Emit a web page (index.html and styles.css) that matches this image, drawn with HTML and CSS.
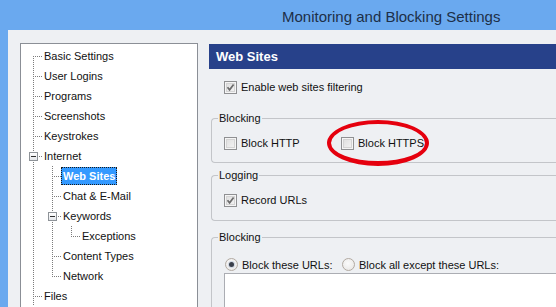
FILE: index.html
```html
<!DOCTYPE html>
<html>
<head>
<meta charset="utf-8">
<link rel="stylesheet" href="styles.css">
</head>
<body>
<div class="window">
  <div class="titlebar">Monitoring and Blocking Settings</div>
  <div class="client">
    <div class="tree">
      <div class="row"><span class="c first"></span><span class="lbl">Basic Settings</span></div>
      <div class="row"><span class="c tee"></span><span class="lbl">User Logins</span></div>
      <div class="row"><span class="c tee"></span><span class="lbl">Programs</span></div>
      <div class="row"><span class="c tee"></span><span class="lbl">Screenshots</span></div>
      <div class="row"><span class="c tee"></span><span class="lbl">Keystrokes</span></div>
      <div class="row"><span class="c tee"><span class="exp"></span></span><span class="lbl">Internet</span></div>
      <div class="row"><span class="i v"></span><span class="c tee"></span><span class="lbl sel">Web Sites</span></div>
      <div class="row"><span class="i v"></span><span class="c tee"></span><span class="lbl">Chat &amp; E-Mail</span></div>
      <div class="row"><span class="i v"></span><span class="c tee"><span class="exp"></span></span><span class="lbl">Keywords</span></div>
      <div class="row"><span class="i v"></span><span class="i v"></span><span class="c last"></span><span class="lbl">Exceptions</span></div>
      <div class="row"><span class="i v"></span><span class="c tee"></span><span class="lbl">Content Types</span></div>
      <div class="row"><span class="i v"></span><span class="c last"></span><span class="lbl">Network</span></div>
      <div class="row"><span class="c tee"></span><span class="lbl">Files</span></div>
    </div>
    <div class="panel">
      <div class="header">Web Sites</div>
      <div class="content">
        <div class="opt top-opt"><span class="cb"><svg width="9" height="9" viewBox="0 0 9 9"><path d="M1.5 4.2 L3.6 6.8 L7.6 1.4" fill="none" stroke="#6b6b6b" stroke-width="1.7"/></svg></span>Enable web sites filtering</div>
        <div class="group g1">
          <div class="glabel">Blocking</div>
          <div class="opts">
            <div class="opt wide"><span class="cb"></span>Block HTTP</div>
            <div class="opt mark"><span class="cb"></span>Block HTTPS</div>
          </div>
        </div>
        <div class="group g2">
          <div class="glabel">Logging</div>
          <div class="opts">
            <div class="opt"><span class="cb"><svg width="9" height="9" viewBox="0 0 9 9"><path d="M1.5 4.2 L3.6 6.8 L7.6 1.4" fill="none" stroke="#6b6b6b" stroke-width="1.7"/></svg></span>Record URLs</div>
          </div>
        </div>
        <div class="group g3">
          <div class="glabel">Blocking</div>
          <div class="opts radios">
            <div class="opt wide"><span class="rb on"></span>Block these URLs:</div>
            <div class="opt"><span class="rb"></span>Block all except these URLs:</div>
          </div>
          <div class="textbox"></div>
        </div>
      </div>
    </div>
  </div>
</div>
</body>
</html>
```
FILE: styles.css
```css
html, body {
  margin: 0;
  padding: 0;
  width: 556px;
  height: 307px;
  overflow: hidden;
}
body {
  font-family: "Liberation Sans", Arial, sans-serif;
  font-size: 11px;
  color: #111;
}
.window {
  width: 556px;
  height: 307px;
  background: #6aa9ef;
  display: flex;
  flex-direction: column;
  overflow: hidden;
}
.titlebar {
  height: 30px;
  flex: none;
  box-sizing: border-box;
  padding: 8px 0 0 282px;
  font-size: 15px;
  line-height: 18px;
  color: #1d2f48;
  white-space: nowrap;
}
.client {
  flex: 1;
  margin-left: 8px;
  background: #eef0f3;
  display: flex;
  align-items: stretch;
  padding: 13px 0 0 12px;
  overflow: hidden;
}
.tree {
  width: 178px;
  flex: none;
  box-sizing: border-box;
  border: 1px solid #8b8f96;
  border-bottom: none;
  background: #fff;
  padding: 2px 0 0 7px;
  overflow: hidden;
}
.row {
  height: 20px;
  display: flex;
  align-items: center;
  white-space: nowrap;
}
.i, .c {
  height: 20px;
  flex: none;
  display: flex;
  align-items: center;
}
.i { width: 19px; }
.c { width: 14px; }
.i.v {
  background: repeating-linear-gradient(to bottom, #7c7c7c 0 1px, transparent 1px 2px) 5px 0 / 1px 20px no-repeat;
}
.c.tee {
  background:
    repeating-linear-gradient(to bottom, #7c7c7c 0 1px, transparent 1px 2px) 5px 0 / 1px 20px no-repeat,
    repeating-linear-gradient(to right, #7c7c7c 0 1px, transparent 1px 2px) 5px 10px / 9px 1px no-repeat;
}
.c.first {
  background:
    repeating-linear-gradient(to bottom, #7c7c7c 0 1px, transparent 1px 2px) 5px 10px / 1px 10px no-repeat,
    repeating-linear-gradient(to right, #7c7c7c 0 1px, transparent 1px 2px) 5px 10px / 9px 1px no-repeat;
}
.c.last {
  background:
    repeating-linear-gradient(to bottom, #7c7c7c 0 1px, transparent 1px 2px) 5px 0 / 1px 11px no-repeat,
    repeating-linear-gradient(to right, #7c7c7c 0 1px, transparent 1px 2px) 5px 10px / 9px 1px no-repeat;
}
.exp {
  width: 9px;
  height: 9px;
  box-sizing: border-box;
  margin: 1px 0 0 1px;
  border: 1px solid #8e9398;
  background: linear-gradient(#ffffff, #e4e6ea);
  display: flex;
  align-items: center;
  justify-content: center;
}
.exp::before {
  content: "";
  width: 5px;
  height: 1px;
  background: #2e2e2e;
}
.lbl {
  padding: 0 2px;
  line-height: 18px;
  color: #111;
}
.lbl.sel {
  background: #3399ff;
  color: #fff;
  font-weight: bold;
  outline: 1px dotted #1a1a1a;
  outline-offset: -1px;
}
.panel {
  width: 347px;
  flex: none;
  margin-left: 11px;
  padding-top: 1px;
  overflow: hidden;
}
.header {
  height: 25px;
  background: #27418a;
  color: #fff;
  font-weight: bold;
  font-size: 13px;
  line-height: 26px;
  padding-left: 7px;
}
.content {
  padding-left: 2px;
}
.opt {
  height: 20px;
  display: flex;
  align-items: center;
  white-space: nowrap;
}
.top-opt {
  margin: 8px 0 0 13px;
}
.cb {
  width: 13px;
  height: 13px;
  flex: none;
  box-sizing: border-box;
  border: 1px solid #8f9092;
  background: linear-gradient(135deg, #dcdcdc, #f6f6f6);
  box-shadow: inset 0 0 0 1px #f5f5f5, inset 0 0 0 2px #d4d4d4;
  margin-right: 4px;
  display: flex;
  align-items: center;
  justify-content: center;
}
.cb svg { display: block; }
.rb {
  width: 13px;
  height: 13px;
  flex: none;
  box-sizing: border-box;
  border: 1px solid #b2aaa2;
  border-radius: 50%;
  background: radial-gradient(circle at 45% 40%, #fbfbfb, #e6e4e2);
  margin: 0 4px 0 1px;
  display: flex;
  align-items: center;
  justify-content: center;
}
.rb.on::before {
  content: "";
  width: 5px;
  height: 5px;
  border-radius: 50%;
  background: #3a3f4a;
  box-shadow: 0 0 0 1px #cfd6e2;
}
.group {
  border: 1px solid #c3c5c9;
  border-right: none;
  border-radius: 4px 0 0 4px;
}
.glabel {
  display: table;
  margin: -7px 0 0 6px;
  padding: 0 1px;
  background: #eef0f3;
  line-height: 13px;
}
.opts {
  display: flex;
  padding-left: 12px;
}
.wide { width: 117px; }
.g1 { margin-top: 21px; }
.g1 .opts { margin-top: 8px; padding-bottom: 9px; }
.g2 { margin-top: 12px; }
.g2 .opts { margin-top: 8px; padding-bottom: 10px; }
.g3 {
  margin-top: 16px;
  height: 69px;
  border-bottom: none;
  border-radius: 4px 0 0 0;
}
.radios { margin-top: 12px; }
.radios .opt { height: 17px; }
.textbox {
  margin-left: 12px;
  height: 33px;
  background: #fff;
  border: 1px solid #abadb3;
  border-right: none;
  border-bottom: none;
}
.mark {
  position: relative;
}
.mark::after {
  content: "";
  position: absolute;
  left: -14px;
  top: -13px;
  width: 102px;
  height: 46px;
  box-sizing: border-box;
  border: 4px solid #e5000e;
  border-bottom-width: 5px;
  border-radius: 50%;
}
```
